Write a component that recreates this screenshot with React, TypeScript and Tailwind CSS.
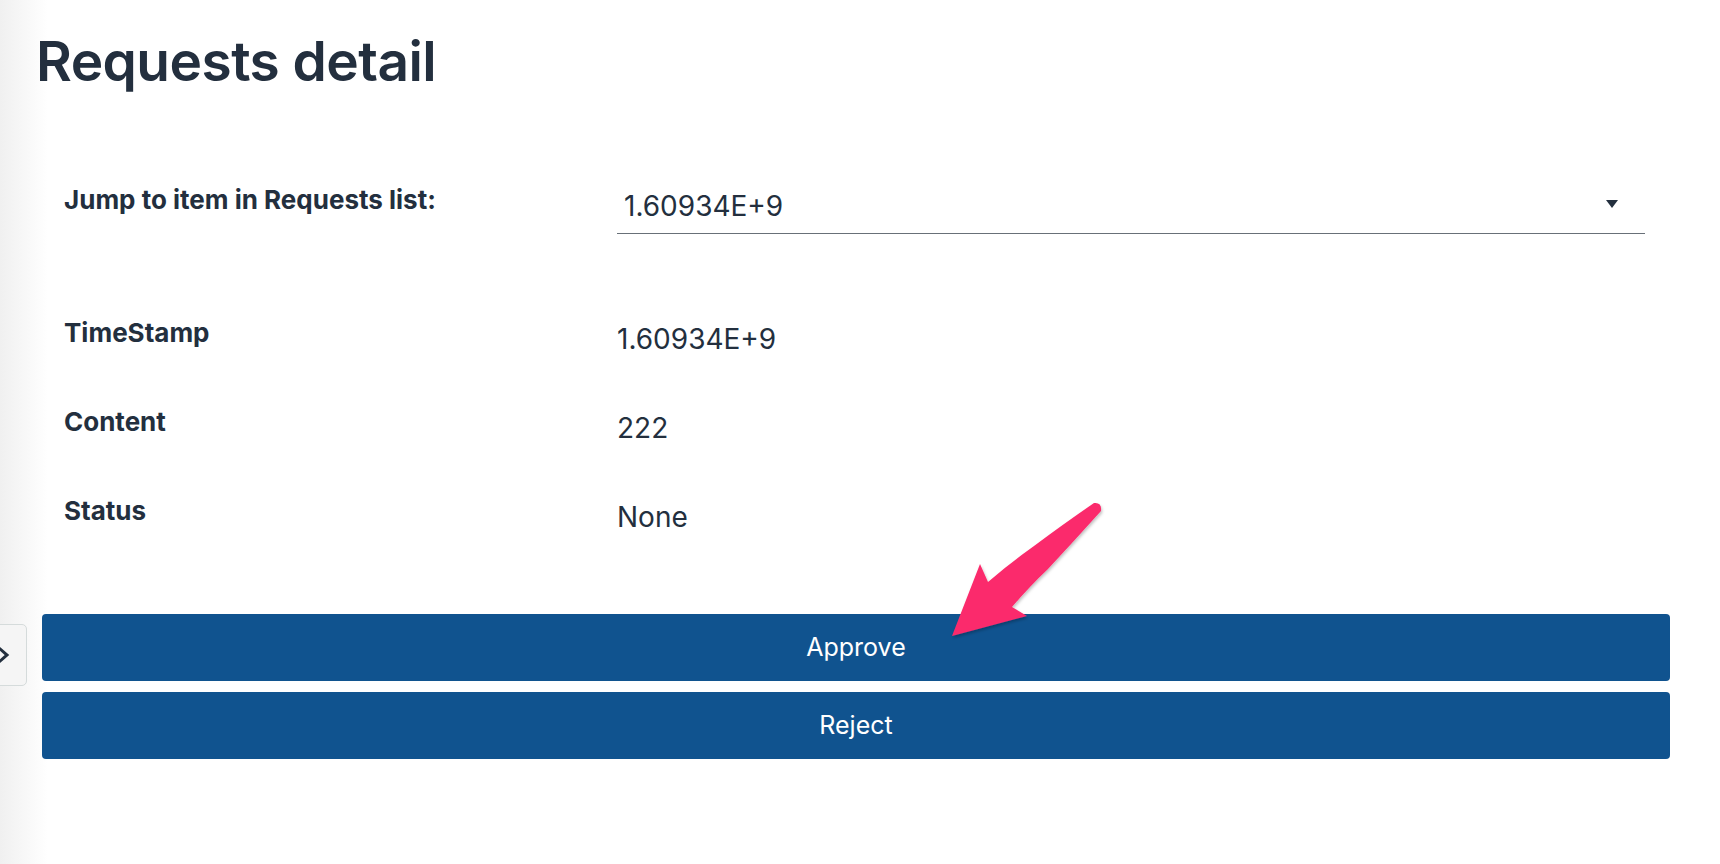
import React from "react";

function Arrow() {
  return (
    <svg
      className="absolute left-0 top-0 pointer-events-none"
      width={1720}
      height={864}
      viewBox="0 0 1720 864"
    >
      <defs>
        <filter id="sh" x="-20%" y="-20%" width="140%" height="140%">
          <feDropShadow dx="1" dy="2" stdDeviation="1.5" floodColor="#000" floodOpacity="0.25" />
        </filter>
      </defs>
      <path
        d="M1094 503 Q1062 525 1034 546 Q1010 563 988 582 L980 564 L952 636 L1027 616 L1012 607 Q1030 586 1048 569 Q1075 540 1101 511 Q1102 502 1094 503 Z"
        fill="#fb2c6c"
        filter="url(#sh)"
      />
    </svg>
  );
}

function Row({ label, value }: { label: string; value: string }) {
  return (
    <div className="flex h-[89px] items-start">
      <div className="w-[553px] text-[26px] font-bold leading-[30px]">{label}</div>
      <div className="mt-[4px] text-[28px] leading-[34px]">{value}</div>
    </div>
  );
}

export default function App() {
  return (
    <div className="relative min-h-[864px] w-full overflow-hidden bg-white font-['Inter',sans-serif] text-[#232f3e]">
      <div className="absolute left-0 top-0 h-full w-[48px] bg-gradient-to-r from-[#f0f0f0] to-white" />

      <div className="relative pl-[36px] pt-[28px]">
        <h1 className="text-[55px] font-semibold leading-[66px] tracking-[-0.01em]">Requests detail</h1>

        <div className="mt-[91px] pl-[28px]">
          <div className="flex items-start">
            <div className="w-[553px] text-[26px] font-bold leading-[30px]">Jump to item in Requests list:</div>
            <div className="mt-[4px] flex w-[1028px] items-start justify-between border-b border-[#687078] pb-[10px] pl-[7px] pr-[26px]">
              <span className="text-[28px] leading-[34px]">1.60934E+9</span>
              <svg width="14" height="10" viewBox="0 0 14 10" className="mt-[10px]">
                <path d="M1 1 L13 1 L7 9 Z" fill="#232f3e" />
              </svg>
            </div>
          </div>

          <div className="mt-[84px]">
            <Row label="TimeStamp" value="1.60934E+9" />
            <Row label="Content" value="222" />
            <Row label="Status" value="None" />
          </div>
        </div>

        <div className="ml-[6px] mt-[29px] flex w-[1628px] flex-col gap-[11px]">
          <button className="flex h-[67px] items-center justify-center rounded-[4px] bg-[#10538f] text-[25px] text-white">
            Approve
          </button>
          <button className="flex h-[67px] items-center justify-center rounded-[4px] bg-[#10538f] text-[25px] text-white">
            Reject
          </button>
        </div>
      </div>

      <div className="absolute left-[-12px] top-[624px] flex h-[62px] w-[39px] items-center rounded-[5px] border border-[#d5dbdb] bg-[#f5f5f5]">
        <svg width="24" height="20" viewBox="0 0 24 20" className="ml-[6px]">
          <path d="M4 3 L12 10 L4 17" fill="none" stroke="#232f3e" strokeWidth="3" />
        </svg>
      </div>

      <Arrow />
    </div>
  );
}
